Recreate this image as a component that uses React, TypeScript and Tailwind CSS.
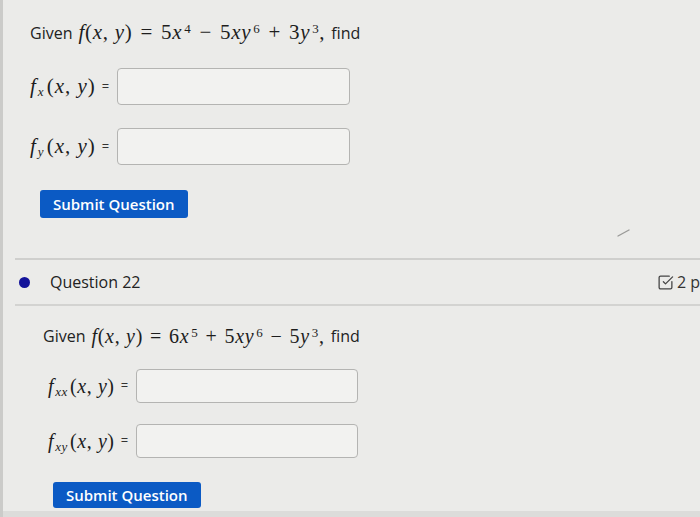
import { SquareCheckBig } from "lucide-react";

const SANS = "font-['Open_Sans','Liberation_Sans',sans-serif]";
const SERIF = "font-['Liberation_Serif','DejaVu_Serif',serif]";

function V({ children }: { children: React.ReactNode }) {
  return <span className="italic">{children}</span>;
}

function Sup({ children }: { children: React.ReactNode }) {
  return <sup className="ml-[2px] text-[13px]">{children}</sup>;
}

function Op({ children, small }: { children: React.ReactNode; small?: boolean }) {
  return <span className={small ? "mx-[7px]" : "mx-[8px]"}>{children}</span>;
}

function Fn({ sub, small }: { sub: React.ReactNode; small?: boolean }) {
  return (
    <span
      className={`${SERIF} text-[#1d1d1d] ${small ? "text-[20px] tracking-[0.6px]" : "text-[21px] tracking-[1px]"}`}
    >
      <V>f</V>
      <sub className="ml-[1px] mr-[2px] text-[13px] italic">{sub}</sub>(<V>x</V>, <V>y</V>)
    </span>
  );
}

function AnswerRow({
  sub,
  boxLeft,
  small,
}: {
  sub: React.ReactNode;
  boxLeft: string;
  small?: boolean;
}) {
  return (
    <div className="flex items-center">
      <div className={`flex items-center ${boxLeft}`}>
        <Fn sub={sub} small={small} />
        <span className={`${SANS} ml-[6px] text-[13px] text-[#333]`}>=</span>
      </div>
      <div
        className={`ml-[4px] rounded-[4px] border border-[#b4b4b2] bg-[#f2f2f0] ${small ? "h-[34px] w-[222px]" : "h-[37px] w-[233px]"}`}
      />
    </div>
  );
}

function SubmitButton({ small }: { small?: boolean }) {
  return (
    <button
      className={`${SANS} rounded-[3px] bg-[#0b5ac4] px-[13px] text-[15px] font-semibold text-white ${small ? "h-[26px]" : "h-[28px]"}`}
    >
      Submit Question
    </button>
  );
}

export default function App() {
  return (
    <div className="relative h-[517px] w-[700px] overflow-hidden border-l-[3px] border-[#cbcbc9] bg-[#ebebe9] text-[#222]">
      {/* stray mark on the screen */}
      <svg className="absolute left-[614px] top-[228px]" width="14" height="10" viewBox="0 0 14 10">
        <path d="M1 8 L12 2" stroke="#9a9a98" strokeWidth="1.4" strokeLinecap="round" />
      </svg>

      <div className="pl-[27px] pt-[18px]">
        <div className="flex h-[30px] items-center">
          <span className={`${SANS} text-[16px]`}>Given</span>
          <span className={`${SERIF} ml-[6px] text-[21px] tracking-[0.7px] text-[#1d1d1d]`}>
            <V>f</V>(<V>x</V>, <V>y</V>)<Op>=</Op>5<V>x</V>
            <Sup>4</Sup>
            <Op>−</Op>5<V>xy</V>
            <Sup>6</Sup>
            <Op>+</Op>3<V>y</V>
            <Sup>3</Sup>,
          </span>
          <span className={`${SANS} ml-[6px] text-[16px]`}>find</span>
        </div>
        <div className="mt-[20px]">
          <AnswerRow sub="x" boxLeft="w-[83px]" />
        </div>
        <div className="mt-[23px]">
          <AnswerRow sub="y" boxLeft="w-[83px]" />
        </div>
        <div className="mt-[25px] pl-[10px]">
          <SubmitButton />
        </div>
      </div>

      <div className="ml-[12px] mt-[40px] h-[2px] bg-[#cfcfcd]" />
      <div className="flex h-[44px] items-center justify-between pl-[16px]">
        <div className="flex items-center">
          <span className="h-[11px] w-[11px] rounded-full bg-[#13139a]" />
          <span className={`${SANS} ml-[20px] text-[16px] font-medium`}>Question 22</span>
        </div>
        <div className="flex items-center text-[#444]">
          <SquareCheckBig size={17} strokeWidth={1.8} />
          <span className={`${SANS} ml-[3px] text-[16px] text-[#333]`}>2 p</span>
        </div>
      </div>
      <div className="ml-[12px] h-[2px] bg-[#d3d3d1]" />

      <div className="pl-[40px] pt-[15px]">
        <div className="flex h-[30px] items-center">
          <span className={`${SANS} text-[16px]`}>Given</span>
          <span className={`${SERIF} ml-[6px] text-[20px] tracking-[0.7px] text-[#1d1d1d]`}>
            <V>f</V>(<V>x</V>, <V>y</V>)<Op small>=</Op>6<V>x</V>
            <Sup>5</Sup>
            <Op small>+</Op>5<V>xy</V>
            <Sup>6</Sup>
            <Op small>−</Op>5<V>y</V>
            <Sup>3</Sup>,
          </span>
          <span className={`${SANS} ml-[6px] text-[16px]`}>find</span>
        </div>
        <div className="mt-[18px] pl-[5px]">
          <AnswerRow sub="xx" boxLeft="w-[84px]" small />
        </div>
        <div className="mt-[21px] pl-[5px]">
          <AnswerRow sub="xy" boxLeft="w-[84px]" small />
        </div>
        <div className="mt-[24px] pl-[10px]">
          <SubmitButton small />
        </div>
      </div>
      <div className="absolute bottom-0 left-0 h-[6px] w-full bg-[#dcdcda]" />
    </div>
  );
}
